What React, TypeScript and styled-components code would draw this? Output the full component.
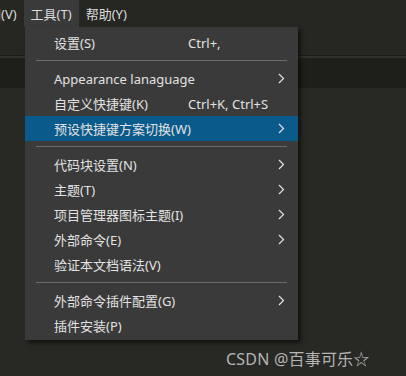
import styled, { createGlobalStyle } from 'styled-components';

const GlobalStyle = createGlobalStyle`
  html, body {
    margin: 0;
    padding: 0;
    background: #282924;
  }
  body {
    font-family: "Noto Sans", "Noto Sans CJK SC", sans-serif;
  }
`;

const Window = styled.div`
  position: relative;
  width: 406px;
  height: 376px;
  overflow: hidden;
  background: #282924;
  display: flex;
  flex-direction: column;
`;

const MenuBar = styled.div`
  height: 27px;
  display: flex;
  align-items: stretch;
  background: #262722;
`;

const BarItem = styled.div<{ $active?: boolean; $offset?: number }>`
  display: flex;
  align-items: center;
  padding: 0 7px;
  margin-left: ${(p) => p.$offset ?? 0}px;
  font-size: 13px;
  color: #dcdcdc;
  background: ${(p) => (p.$active ? '#3a3a3a' : 'transparent')};
  white-space: nowrap;
`;

const ToolStrip = styled.div`
  height: 28px;
  background: #262722;
  border-bottom: 1px solid #1a1b17;
`;

const TabStrip = styled.div`
  height: 30px;
  background: #1e1f1b;
  border-top: 2px solid #30312c;
`;

const Editor = styled.div`
  flex: 1;
  background: #282924;
`;

const Dropdown = styled.div`
  position: absolute;
  left: 25px;
  top: 27px;
  width: 273px;
  padding: 3px 0 2px;
  background: #3a3a3a;
  box-shadow: 3px 3px 4px rgba(0, 0, 0, 0.55);
  display: flex;
  flex-direction: column;
`;

const Row = styled.div<{ $hover?: boolean }>`
  height: 25px;
  display: grid;
  grid-template-columns: 134px 1fr 20px;
  align-items: center;
  padding-left: 29px;
  font-size: 13px;
  color: #e2e2e2;
  background: ${(p) => (p.$hover ? '#0b5a8c' : 'transparent')};
  white-space: nowrap;
`;

const Label = styled.span``;

const Shortcut = styled.span`
  color: #e2e2e2;
`;

const Arrow = styled.span`
  display: flex;
  align-items: center;
`;

const Separator = styled.div`
  height: 1px;
  margin: 5px 11px 5px 11px;
  background: #6b6b6b;
`;

const Watermark = styled.div`
  position: absolute;
  left: 226px;
  top: 346px;
  font-size: 16px;
  color: #b4b4b4;
  font-family: "Noto Sans", "Noto Sans CJK SC", sans-serif;
  letter-spacing: 0.2px;
`;

const Chevron = () => (
  <svg width="7" height="11" viewBox="0 0 7 11">
    <polyline points="1,1 5.5,5.5 1,10" fill="none" stroke="#e2e2e2" strokeWidth="1.2" />
  </svg>
);

type Item = { label: string; shortcut?: string; sub?: boolean; hover?: boolean } | 'sep';

const items: Item[] = [
  { label: '设置(S)', shortcut: 'Ctrl+,' },
  'sep',
  { label: 'Appearance lanaguage', sub: true },
  { label: '自定义快捷键(K)', shortcut: 'Ctrl+K, Ctrl+S' },
  { label: '预设快捷键方案切换(W)', sub: true, hover: true },
  'sep',
  { label: '代码块设置(N)', sub: true },
  { label: '主题(T)', sub: true },
  { label: '项目管理器图标主题(I)', sub: true },
  { label: '外部命令(E)', sub: true },
  { label: '验证本文档语法(V)' },
  'sep',
  { label: '外部命令插件配置(G)', sub: true },
  { label: '插件安装(P)' },
];

export default function App() {
  return (
    <>
      <GlobalStyle />
      <Window>
        <MenuBar>
          <BarItem $offset={-32}>视图(V)</BarItem>
          <BarItem $active>工具(T)</BarItem>
          <BarItem>帮助(Y)</BarItem>
        </MenuBar>
        <ToolStrip />
        <TabStrip />
        <Editor />
        <Dropdown>
          {items.map((it, i) =>
            it === 'sep' ? (
              <Separator key={i} />
            ) : (
              <Row key={i} $hover={it.hover}>
                <Label>{it.label}</Label>
                <Shortcut>{it.shortcut ?? ''}</Shortcut>
                <Arrow>{it.sub ? <Chevron /> : null}</Arrow>
              </Row>
            )
          )}
        </Dropdown>
        <Watermark>CSDN @百事可乐☆</Watermark>
      </Window>
    </>
  );
}
